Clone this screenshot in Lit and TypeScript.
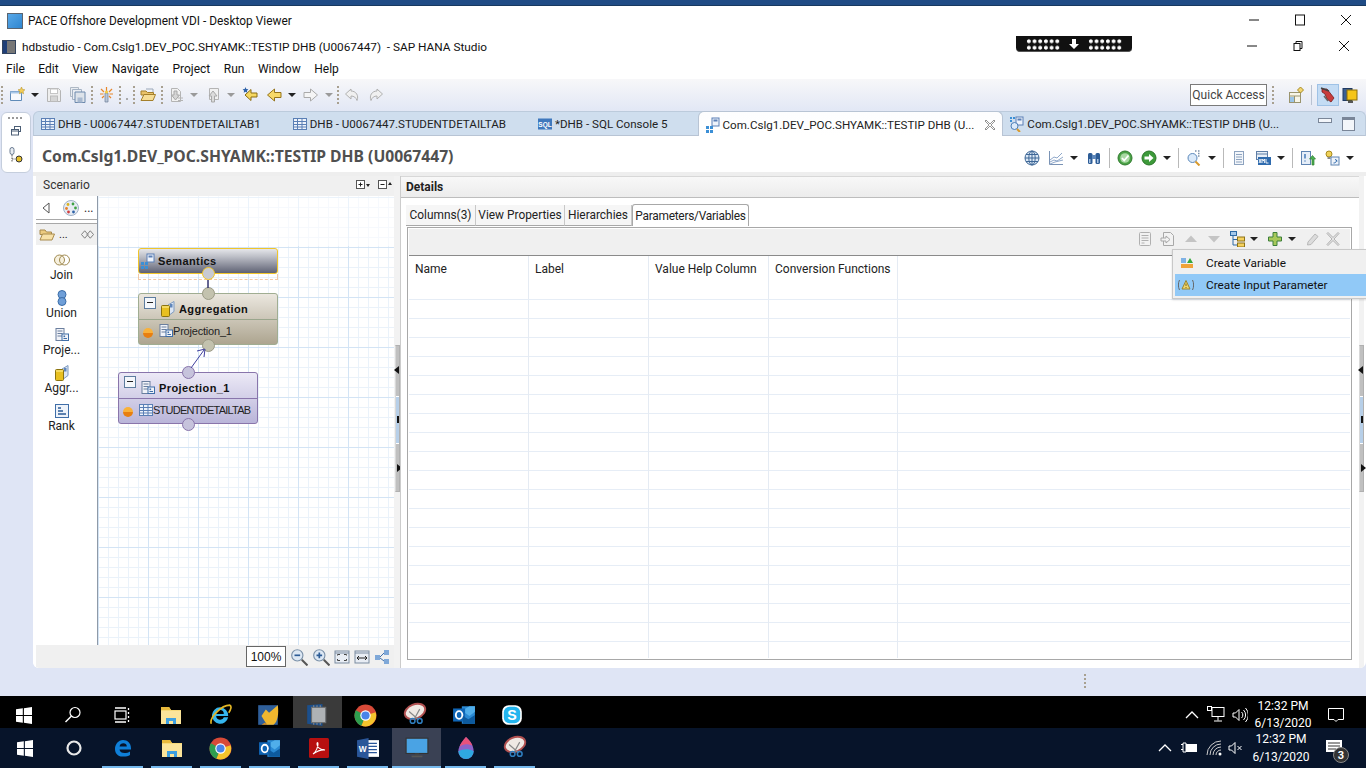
import {LitElement, html, svg, css} from 'lit';
import {customElement} from 'lit/decorators.js';

const ic = (body: unknown, size = 16, vb = 16) =>
    html`<svg class="ic" width="${size}" height="${size}" viewBox="0 0 ${vb} ${vb}">${body}</svg>`;

const hana = svg`<ellipse cx="11" cy="8" rx="9" ry="6" transform="rotate(-22 11 8)" fill="#efe9e4" stroke="#b05050" stroke-width="1.6"/><path d="M6 8l8 7M15 6l-5 9" stroke="#888"/><circle cx="15" cy="16" r="2" fill="none" stroke="#2f7fc0" stroke-width="1.3"/><circle cx="9" cy="16" r="2" fill="none" stroke="#2f7fc0" stroke-width="1.3"/>`;
const winLogo = svg`<path d="M1 3.300l6.800-1v6.700H1zM8.900 2.200L17 1v8H8.900zM1 10h6.800v6.700L1 15.700zM8.900 10H17v8l-8.100-1.200z" fill="#fff"/>`;
const folder = svg`<path d="M1 3h8l2 3h10v14H1z" fill="#f6d97a"/><path d="M1 3h8l2 3H1z" fill="#e8b93c"/><path d="M1 7h20v13H1z" fill="#fbe49a"/><path d="M6 20v-6h10v6h-3v-3H9v3z" fill="#3d9fe0"/>`;
const chrome = svg`<circle cx="11" cy="11" r="10.500" fill="#d84a38"/><path d="M11 11l9.700-3A10.500 10.500 0 0 1 7 20.800z" fill="#f5c42c"/><path d="M11 11L7 20.800A10.500 10.500 0 0 1 1.800 6z" fill="#2e9e4f"/><circle cx="11" cy="11" r="5" fill="#fff"/><circle cx="11" cy="11" r="3.900" fill="#4a84e8"/>`;
const outlook = svg`<rect x="9" y="3" width="12" height="16" fill="#2a8ad4"/><path d="M9 7l7-4h5v5l-5 4z" fill="#50aeea"/><rect x="1" y="5" width="11" height="12" fill="#0f65b5"/><ellipse cx="6.500" cy="11" rx="3" ry="3.600" fill="none" stroke="#fff" stroke-width="1.700"/><path d="M10 12l5 3 6-4v8H10z" fill="#0d5a9e"/>`;
const calcBlocks = svg`<rect x="7" y="1" width="7" height="8" fill="#eef3fb" stroke="#5a7fb5"/><rect x="8.500" y="2.500" width="4" height="2" fill="#5a7fb5"/>`;

const toolIcons: Record<string, unknown> = {
    newf: svg`<path d="M1.500 4.500h11v9h-11z" fill="#f7fafd" stroke="#5f8bb8"/><path d="M1.500 4.500h11v2h-11z" fill="#a8c8e8"/><path d="M12.500 0l1 2.400 2.400.4-1.800 1.600.5 2.400-2.100-1.300-2.100 1.300.5-2.400L9 2.800l2.400-.4z" fill="#f2cd56" stroke="#b08a1f" stroke-width=".5"/>`,
    save: svg`<path d="M1.500 1.500h11l2 2v11h-13z" fill="#eee" stroke="#b5b5b5"/><rect x="4.500" y="2" width="7" height="4.500" fill="#fff" stroke="#c5c5c5"/><rect x="4.500" y="9" width="7" height="5.500" fill="#d5d5d5" stroke="#bbb"/>`,
    saveall: svg`<path d="M.5 .5h8v9h-8z" fill="#e9edf2" stroke="#aeb8c4"/><path d="M2.500 2.500h9v10h-9z" fill="#e9edf2" stroke="#a4b2c4"/><path d="M5 5h10v10.500H5z" fill="#dde3ea" stroke="#6d89ad"/><rect x="7.500" y="10.500" width="5" height="5" fill="#a8b9d0"/>`,
    wand: svg`<path d="M7 6h3v9H7z" fill="#b9c6d8" stroke="#6d7f99" stroke-width=".7"/><path d="M8.500 0v4M3 2l3 3M14 2l-3 3M2 7h3.500M11.500 7H15M4 11l2-2M13 11l-2-2" stroke="#e8862a" stroke-width="1.200"/><circle cx="8.500" cy="5" r="1.600" fill="#f2cb40"/>`,
    open: svg`<path d="M1 4h5l1.500 1.500h6V8H1z" fill="#e9c26a" stroke="#a47f2a"/><path d="M1 13.500h12l2.500-6H4z" fill="#f6dd96" stroke="#a47f2a"/><path d="M6 2h7v3" fill="none" stroke="#9aa7b8"/>`,
    imp: svg`<path d="M3.500 1.500h6l3 3v10h-9z" fill="#f1f1f1" stroke="#b4b4b4"/><path d="M6 4h3v4h2.500l-4 5-4-5H6z" fill="#d5d5d5" stroke="#a8a8a8"/><path d="M10 11h5M10 13.500h5" stroke="#b4b4b4"/>`,
    exp: svg`<path d="M4.500 1.500h9v11h-9z" fill="#f1f1f1" stroke="#b4b4b4"/><path d="M6.500 15V9H4l4-5 4 5H9.500v6z" fill="#dcdcdc" stroke="#a8a8a8"/>`,
    starback: svg`<path d="M15 6v4H9v3.500L3 8l6-5.500V6z" fill="#f6d860" stroke="#8a6c12"/><path d="M3.500 0l.8 2 2.100.3-1.500 1.400.4 2-1.800-1-1.800 1 .4-2L.6 2.300l2.100-.3z" fill="#2e62a8"/>`,
    back: svg`<path d="M15 5.500v5H8.500V14l-7-6 7-6v3.500z" fill="#f7d968" stroke="#94731a"/>`,
    fwd: svg`<path d="M1 5.500v5h6.500V14l7-6-7-6v3.500z" fill="#f5f5f5" stroke="#aaa"/>`,
    undo: svg`<path d="M7 2L1.500 7 7 12V9c3 0 5 1.500 6 4.500 2-5-1-9.500-6-9.500z" fill="#f0f0f0" stroke="#b0b0b0"/>`,
    redo: svg`<path d="M9 2l5.500 5L9 12V9c-3 0-5 1.500-6 4.500C1 8.500 4 4 9 4z" fill="#f0f0f0" stroke="#b0b0b0"/>`,
    persp: svg`<rect x="1.500" y="5.500" width="11" height="10" fill="#f7f5e8" stroke="#9a946e"/><path d="M1.500 9h11M6.500 9v6.500" stroke="#9a946e"/><rect x="2" y="10" width="4" height="5" fill="#9bc5e8"/><path d="M12.500 0l3 3-3 3-3-3z" fill="#f3d670" stroke="#a58a24"/>`,
    tool: svg`<path d="M2 2h5l7 9-3 4-4-3-2-5-3-2z" fill="#c83c3c" stroke="#7b1d1d" stroke-width=".8"/><path d="M1 1l8 3" stroke="#444" stroke-width="1.400"/><path d="M4 9l4 5" stroke="#666" stroke-width="1.500"/>`,
    perspY: svg`<rect x="1" y="1.500" width="9" height="12" fill="#3a5f94" stroke="#1f3a63"/><rect x="5" y="3" width="10" height="10" fill="#f5c518" stroke="#8a6d0a"/><rect x="6" y="14" width="5" height="2" fill="#555"/>`,
    globe: svg`<circle cx="8" cy="8" r="7" fill="#dbe8f5" stroke="#3d6696"/><ellipse cx="8" cy="8" rx="3.200" ry="7" fill="none" stroke="#3d6696"/><path d="M1 8h14M2 4.500h12M2 11.500h12M8 1v14" stroke="#3d6696" fill="none"/>`,
    chart: svg`<path d="M1.500 1v13.500H15" fill="none" stroke="#7a93b5"/><path d="M2 10l4-3 3 1 5-5M2 12l4-2 3 1 6-4M2 14l5-2 8-2" fill="none" stroke="#8fa8ca"/>`,
    bino: svg`<rect x="2" y="3" width="4.500" height="11" rx="1.500" fill="#2d5c96"/><rect x="9.500" y="3" width="4.500" height="11" rx="1.500" fill="#2d5c96"/><rect x="6" y="5" width="4" height="4" fill="#5e88bb"/><rect x="3" y="9" width="1.500" height="4" fill="#a9c4e3"/><rect x="11" y="9" width="1.500" height="4" fill="#a9c4e3"/>`,
    check: svg`<circle cx="8" cy="8" r="7" fill="#4aa146" stroke="#2e7a2c"/><circle cx="8" cy="8" r="4.800" fill="#a9d9a4"/><path d="M5 8l2.200 2.500 4.300-5" fill="none" stroke="#fff" stroke-width="1.800"/>`,
    go: svg`<circle cx="8" cy="8" r="7" fill="#3d9a3a" stroke="#2a7528"/><path d="M3.500 6.500H8V4l4.500 4L8 12V9.500H3.500z" fill="#fff"/>`,
    zoomdots: svg`<circle cx="6.500" cy="8" r="4.500" fill="#dbeafa" stroke="#5b88bb"/><path d="M9.500 11.500l4 4" stroke="#d99a2c" stroke-width="2"/><path d="M9 1h1.500M12 1h1.500M12 3.500h1.500M12 6h1.500" stroke="#7a8ea8" stroke-width="1.500"/>`,
    doc: svg`<rect x="3.500" y="1.500" width="9" height="13" fill="#f3f6fa" stroke="#8da3bf"/><path d="M5 4.500h6M5 7h6M5 9.500h6M5 12h6" stroke="#8da3bf"/>`,
    xml: svg`<rect x="1.500" y="1.500" width="11" height="8" fill="#e8eff7" stroke="#5e7ea6"/><path d="M1.500 4h11" stroke="#5e7ea6"/><rect x="3" y="7" width="13" height="8" fill="#2f6bae"/><path d="M4 9l2 4M6 9l-2 4M7 13V9l1.200 2 1.200-2v4M11 9v4h2.500" stroke="#fff" fill="none" stroke-width=".9"/>`,
    pub: svg`<rect x="1.500" y="1.500" width="9" height="13" fill="#e6eef8" stroke="#5f84b2"/><path d="M5 4v4.500M5 10.500v1" stroke="#2f6bae" stroke-width="1.300"/><path d="M12 15V9H9.500l3-3.500 3 3.500H14v6z" fill="#4cb050" stroke="#2f7f32" stroke-width=".7"/>`,
    bulb: svg`<circle cx="5" cy="4" r="3" fill="#f0d25a" stroke="#a88a1e"/><rect x="3.500" y="7" width="3" height="2" fill="#888"/><rect x="7" y="7" width="8" height="8" fill="#eef3fa" stroke="#5f84b2"/><path d="M9.500 13c2 0 3-1 3-3M11 9.500l1.500.5.5 1.500" fill="none" stroke="#2f6bae"/>`,
    note: svg`<rect x="2.500" y="1.500" width="11" height="13" rx="1" fill="#f2f2f2" stroke="#b0b0b0"/><path d="M4.500 4.500h7M4.500 7h7M4.500 9.500h7M4.500 12h3" stroke="#b0b0b0"/>`,
    impdoc: svg`<path d="M3.500 1.500h7l3 3v10h-10z" fill="#f2f2f2" stroke="#a8a8a8"/><path d="M1 7h5V5l4 3.500L6 12v-2H1z" fill="#f2f2f2" stroke="#a8a8a8"/>`,
    hier: svg`<rect x="1.500" y=".5" width="6" height="4" fill="#a4c8ea" stroke="#2e6aa5"/><path d="M4 5v9h4M4 8.500h4" fill="none" stroke="#2e6aa5"/><rect x="8.500" y="6" width="7" height="4" fill="#f5d15f" stroke="#8e7217"/><rect x="8.500" y="12" width="7" height="4" fill="#f5d15f" stroke="#8e7217"/>`,
    plus: svg`<path d="M6 1.500h4V6h4.500v4H10v4.500H6V10H1.500V6H6z" fill="#a7c85a" stroke="#3c7f3a"/>`,
    pen: svg`<path d="M3 11l7-8 3 2.500-7 8-3.500.5z" fill="#dcdcdc" stroke="#b8b8b8"/>`,
    del: svg`<path d="M2 2.500L3 1.500 8 6.500 13 1.500l1 1-5 5.500 5 5.500-1 1-5-5-5 5-1-1 5-5.500z" fill="#e8e8e8" stroke="#a0a0a0" stroke-width=".8"/>`,
    up: svg`<path d="M8 4.500l6 6.500H2z" fill="#c4c4c4"/>`,
    down: svg`<path d="M8 11.500L14 5H2z" fill="#c4c4c4"/>`,
    restore: svg`<rect x="6.500" y="3.500" width="6" height="5" fill="#fff" stroke="#4b5d75"/><rect x="3.500" y="6.500" width="7" height="5.500" fill="#fff" stroke="#4b5d75"/><path d="M3.500 8h7" stroke="#4b5d75"/>`,
    linkset: svg`<rect x="2" y="0.500" width="4" height="7" rx="2" fill="#e8edf3" stroke="#6b7b90"/><path d="M4 8v7M4 12h3" stroke="#555" stroke-dasharray="1.500 1"/><circle cx="11" cy="12" r="3" fill="#e6c12e" stroke="#333"/>`,
    sql: svg`<rect x="1" y="2.500" width="14" height="11" fill="#3f78bd"/><text x="8" y="11" font-size="6.500" font-family="Liberation Sans, sans-serif" font-weight="700" fill="#fff" text-anchor="middle">SQL</text>`,
    table: svg`<rect x="1.500" y="2.500" width="13" height="11" fill="#eef3fb" stroke="#5a7fb5"/><path d="M1.500 5.500h13M1.500 8.500h13M1.500 11h13M5.500 3v10M10 3v10" stroke="#5a7fb5" fill="none"/>`,
    calc: svg`${calcBlocks}<rect x="1" y="9" width="3" height="3" fill="#3b8fd6"/><rect x="5" y="9" width="3" height="3" fill="#3b8fd6"/><rect x="1" y="13" width="3" height="3" fill="#3b8fd6"/><rect x="5" y="13" width="3" height="3" fill="#3b8fd6"/>`,
    calcq: svg`${calcBlocks}<circle cx="5.500" cy="10" r="3.500" fill="#dbeafa" stroke="#4d7fb6"/><path d="M8 13l3 3" stroke="#d99a2c" stroke-width="2"/><rect x="1" y="1" width="2" height="2" fill="#3b8fd6"/><rect x="4" y="1" width="2" height="2" fill="#3b8fd6"/><rect x="1" y="4" width="2" height="2" fill="#3b8fd6"/>`,
    join: svg`<circle cx="5.500" cy="8" r="5" fill="#f7f1df" stroke="#a08a50"/><circle cx="10.500" cy="8" r="5" fill="none" stroke="#a08a50"/>`,
    union: svg`<circle cx="8" cy="4.500" r="4" fill="#6f9fd8" stroke="#3c6ea8"/><circle cx="8" cy="11.500" r="4" fill="#6f9fd8" stroke="#3c6ea8"/>`,
    proj: svg`<rect x="2" y="1.500" width="8" height="12" fill="#f1f3f8" stroke="#6b7f9e"/><path d="M3.500 4h5M3.500 6.500h5M3.500 9h5" stroke="#6b7f9e"/><rect x="8" y="7" width="6.500" height="6.500" fill="#f1f3f8" stroke="#3f6ea8"/><rect x="9.500" y="8.500" width="1.600" height="1.600" fill="#3f6ea8"/><path d="M9.500 11.500H13" stroke="#3f6ea8"/>`,
    aggr: svg`<path d="M8 4l6-3.500v10l-6 4.500z" fill="#dde6f3" stroke="#7d9ac0"/><rect x="10" y="3" width="2.500" height="3.500" fill="#5f86bb"/><rect x="1.500" y="4.500" width="8" height="11" rx="1" fill="#e8c020" stroke="#8a7310"/><path d="M2 6h7" stroke="#fff3a0"/>`,
    rank: svg`<rect x="1.500" y="1.500" width="13" height="13" fill="#eef3fa" stroke="#3f6ea8"/><path d="M4 5h3M4 8h5M4 11h8" stroke="#2d5c96" stroke-width="1.500"/>`,
    palette: svg`<circle cx="8" cy="8" r="7.500" fill="#e7ecf3" stroke="#9fb0c6"/><circle cx="5" cy="4.500" r="1.400" fill="#d9b21f"/><circle cx="10" cy="4" r="1.400" fill="#3fa244"/><circle cx="12.500" cy="8" r="1.400" fill="#3fa244"/><circle cx="3.500" cy="8.500" r="1.400" fill="#e8812a"/><circle cx="5.500" cy="12" r="1.400" fill="#d23c3c"/><circle cx="10.500" cy="12" r="1.400" fill="#2e62a8"/>`,
    pfolder: svg`<path d="M1 3h5l1.500 2h5v2.500H1z" fill="#eccb80" stroke="#a88a4c"/><path d="M1 13h12l2.500-6h-12z" fill="#f7e1a8" stroke="#a88a4c"/>`,
    variable: svg`<rect x="3" y="3" width="5" height="5" fill="#7fb2e5"/><path d="M12 3l3 5H9z" fill="#35a83c"/><rect x="3" y="9" width="12" height="4" fill="#f0a33a"/>`,
    inparam: svg`<path d="M8 3.500l4 8.500H4z" fill="#f0d56a" stroke="#9a8430"/><path d="M8 6.500v2.500M8 10v1" stroke="#7b6a20"/><path d="M1.500 3c-1.500 3-1.500 7 0 10M14.500 3c1.500 3 1.500 7 0 10" fill="none" stroke="#666"/>`,
};

const I = (k: string) => ic(toolIcons[k]);
const caret = html`<i class="caret"></i>`;
const chevron = svg`<path d="M1 10l6-6 6 6" fill="none" stroke="#fff" stroke-width="1.300"/>`;

@customElement('app-root')
export class AppRoot extends LitElement {
    static override styles = css`
        :host {
            display: block;
            width: 1366px;
            height: 768px;
            overflow: hidden;
            position: relative;
            background: #fff;
            font-family: Roboto, "Noto Sans", sans-serif;
            font-size: 12px;
            color: #222;
        }
        * { box-sizing: border-box; }
        .ic { flex: none; display: block; }
        .root { display: flex; flex-direction: column; height: 768px; }

        .strip { height: 6px; background: #1f4b85; border-bottom: 1px solid #17385f; flex: none; }
        .vtitle { height: 30px; flex: none; display: flex; align-items: center; padding: 0 0 0 7px; font-size: 11.9px; color: #111; }
        .vlogo { width: 16px; height: 16px; background: linear-gradient(135deg,#58a8e8,#2f86d0); border: 1px solid #5a6470; margin-right: 5px; }
        .winbtns { margin-left: auto; display: flex; margin-right: -3px; margin-top: -2px; }
        .atitle .winbtns { margin-right: -1px; }
        .winbtns span { width: 46px; height: 22px; display: flex; align-items: center; justify-content: center; }
        .atitle { height: 22px; flex: none; display: flex; align-items: center; padding-left: 2px; font-size: 11.8px; color: #111; }
        .alogo { width: 14px; height: 14px; background: linear-gradient(90deg,#1f3f78 30%,#777 30%); border: 1px solid #33445e; margin-right: 6px; }
        .menu { height: 21px; flex: none; display: flex; gap: 13.5px; align-items: center; padding-left: 6px; font-size: 12px; color: #111; }

        .toolbar { height: 32px; flex: none; display: flex; align-items: center; padding: 0 8px 1px 1px; background: linear-gradient(#f7f7f9,#e2e7f5); }
        .toolbar .ic { margin-right: 8px; }
        .grip { width: 2px; height: 18px; flex: none; margin: 0 5px 0 -3px; background: repeating-linear-gradient(#a8a090 0 2px, transparent 2px 4px); }
        .grip.first { margin: 0 6px 0 0; }
        .caret { width: 0; height: 0; flex: none; border-left: 4px solid transparent; border-right: 4px solid transparent; border-top: 4px solid #222; margin: 0 7px 0 -2px; }
        .caret.off { border-top-color: #9a9a9a; }
        .dot { width: 2px; height: 2px; background: #aaa; margin: 8px 8px 0 0; flex: none; }
        .quick { margin-left: auto; width: 77px; height: 22px; border: 1px solid #7a7a7a; background: #fff; display: flex; align-items: center; justify-content: center; font-size: 12px; color: #444; margin-right: 5px; }
        .tright { display: flex; align-items: center; }
        .tright .grip { margin: 0 14px 0 0; }
        .tright .ic { margin-right: 0; }
        .vsep { width: 1px; height: 20px; background: #b9c2d2; margin: 0 5px 0 7px; }
        .active { width: 22px; height: 22px; background: #c4dcf4; border: 1px solid #9fc2e6; display: flex; align-items: center; justify-content: center; margin-right: 3px; }

        .work { flex: 1; display: flex; background: #dfe5f5; min-height: 0; }
        .trim { width: 33px; flex: none; padding: 0 2px 0 1px; }
        .trimbox { height: 61px; margin-top: 1px; background: #fff; border: 1px solid #c5cedd; border-radius: 6px; display: flex; flex-direction: column; align-items: center; padding-top: 4px; }
        .tdots { width: 16px; height: 2px; margin-bottom: 4px; background: repeating-linear-gradient(90deg,#999 0 2px, transparent 2px 4px); }
        .trimbox .ic + .ic { margin-top: 8px; }
        .editor { flex: 1; display: flex; flex-direction: column; min-width: 0; }
        .tabs { height: 25px; flex: none; display: flex; background: #cfdeee; border: 1px solid #bccbdc; border-bottom: 1px solid #b8c4d4; border-radius: 6px 6px 0 0; font-size: 11.6px; color: #222; }
        .tab { display: flex; align-items: center; gap: 2px; padding: 1px 25px 0 6px; white-space: nowrap; }
        .tab.sql { padding-right: 30px; }
        .tab.on { background: linear-gradient(#fdfdfe,#fff); border: 1px solid #b8c4d4; border-bottom: none; border-radius: 6px 6px 0 0; height: 25px; margin-top: -1px; padding-right: 6px; }
        .tab.on .close { margin-left: 8px; }
        .tabs .minmax { margin-left: auto; display: flex; gap: 10px; align-items: center; padding-right: 10px; }
        .minb { width: 14px; height: 5px; border: 1px solid #7a8698; background: #f3f6fa; margin-top: -6px; }
        .maxb { width: 13px; height: 14px; border: 1px solid #7a8698; border-top-width: 3px; background: #f3f6fa; }

        .etitle { height: 36px; flex: none; background: #fff; display: flex; align-items: center; padding: 4px 0 0 9px; }
        .etitle h1 { margin: 0; font-size: 15.7px; font-weight: 700; color: #505050; white-space: nowrap; font-family: "Noto Sans", "Liberation Sans", sans-serif; }
        .etools { margin-left: auto; margin-top: 4px; display: flex; align-items: center; padding-right: 12px; }
        .etools .caret { margin: 0 0 0 6px; }
        .esep { width: 1px; height: 20px; background: #b9b9b9; margin: 0 7px; }
        .etools .ic { margin-left: 8px; }
        .etools .esep + .ic { margin-left: 0; }

        .ebody { flex: 1; display: flex; background: #fff; border-top: 4px solid #eee; min-height: 0; border-radius: 0 0 6px 6px; overflow: hidden; }

        .left { width: 361px; flex: none; padding-left: 3px; display: flex; flex-direction: column; background: #fff; }
        .shead { height: 20px; flex: none; display: flex; align-items: center; padding: 0 0 2px 7px; background: #f0f0f0; color: #333; font-size: 12px; }
        .shead .sic { margin-left: auto; display: flex; gap: 6px; padding-right: 1px; }
        .sbody { flex: 1; display: flex; min-height: 0; }
        .palette { width: 62px; flex: none; background: #fff; border-right: 1px solid #8f9aa8; display: flex; flex-direction: column; }
        .pnav { height: 24px; display: flex; align-items: center; gap: 5px; padding: 0 0 0 3px; border-bottom: 1px solid #a8a8a8; }
        .pnav .ic:first-child { margin-right: 3px; }
        .pfold { height: 22px; margin-top: 3px; border-top: 1px solid #a8a8a8; background: #f0f0f0; display: flex; align-items: center; padding-left: 3px; gap: 4px; font-size: 11px; }
        .pfold .swap { margin-left: auto; margin-right: 3px; }
        .pitem { display: flex; flex-direction: column; align-items: center; color: #222; font-size: 12px; line-height: 15px; height: 37.7px; padding-right: 10px; }
        .pitems { padding-top: 7px; }
        .canvas {
            flex: 1; position: relative; overflow: hidden;
            background-color: #fff;
            background-image:
                linear-gradient(#d3e4f5 1px, transparent 1px),
                linear-gradient(90deg, #d3e4f5 1px, transparent 1px),
                linear-gradient(#eaf2fa 1px, transparent 1px),
                linear-gradient(90deg, #eaf2fa 1px, transparent 1px);
            background-size: 50px 50px, 50px 50px, 10px 10px, 10px 10px;
            background-position: 0 1px, 0 0, 0 1px, 0 0;
        }
        .wash { position: absolute; left: 0; top: 0; right: 0; height: 50px; background: rgba(255,255,255,.55); }
        .node { position: absolute; width: 140px; border-radius: 3px; font-family: "Liberation Sans", sans-serif; }
        .node .nh { height: 26px; display: flex; align-items: center; font-weight: 700; font-size: 11px; color: #111; letter-spacing: .4px; }
        .node .nb { height: 26px; display: flex; align-items: center; font-size: 11px; color: #222; padding: 0 0 4px 4px; gap: 2px; letter-spacing: -.2px; }
        .sem { left: 40px; top: 52px; height: 26px; background: linear-gradient(#e5e6ea 0%,#bfc1c9 30%,#5f6274 100%); border: 1px solid #f0c52a; }
        .sem .nh { height: 24px; padding-left: 1px; gap: 2px; }
        .semsel { position: absolute; left: 40px; top: 78px; width: 140px; height: 6px; border: 1px dashed #f2c9a5; border-top: none; }
        .agg { left: 40px; top: 97px; height: 52px; background: linear-gradient(#ebe7df,#ada590); border: 1px solid #a0ad92; }
        .agg .nh { border-bottom: 1px solid #9aa68c; padding: 5px 0 0 5px; }
        .prj { left: 20px; top: 176px; height: 52px; background: linear-gradient(#ece9f6,#b9b5d9); border: 1px solid #8975ab; }
        .prj .nh { border-bottom: 1px solid #8975ab; padding: 5px 0 0 5px; }
        .nt { margin-left: 3px; }
        .nbt { margin-left: -3px; }
        .prj .nbt { letter-spacing: -.75px; }
        .tog { width: 12px; height: 12px; border: 1px solid #5d7c9e; background: #f4f7fb; position: relative; flex: none; margin: -12px 4px 0 0; }
        .tog::after { content: ""; position: absolute; left: 2px; right: 2px; top: 4px; height: 1px; background: #222; }
        .bullet { width: 10px; height: 10px; border-radius: 50%; background: linear-gradient(#f9b13a 50%,#e87f10 50%); flex: none; margin: 4px 3px 0 0; }
        .pin { position: absolute; width: 13px; height: 13px; border-radius: 50%; border: 1px solid #9b9a86; background: #c3c2ae; }
        .pin.y { border-color: #f0c52a; background: #c8cad2; border-width: 1.5px; }
        .pin.p { border-color: #8975ab; background: #c6c3dc; }
        .pin.a { left: 104px; top: 71px; }
        .pin.b { left: 104px; top: 91px; }
        .pin.c { left: 104px; top: 143px; }
        .pin.d { left: 84px; top: 170px; }
        .pin.e { left: 84px; top: 222px; }
        .wire { position: absolute; left: 0; top: 0; pointer-events: none; }
        .zoombar { height: 23px; flex: none; display: flex; align-items: center; justify-content: flex-end; gap: 4px; padding-right: 4px; background: #f0f0f0; }
        .zbox { width: 40px; height: 21px; border: 1px solid #666; background: #fff; display: flex; align-items: center; justify-content: center; font-size: 12px; color: #111; font-family: "Liberation Sans", sans-serif; }

        .sash { width: 6px; flex: none; display: flex; flex-direction: column; background: #f2f2f2; padding-left: 1px; }
        .sash .top { height: 169px; }
        .sash .mid { height: 147px; background: #c0c0c0; position: relative; border: 1px solid #b0b0b0; border-left-color: #d8d8d8; }
        .sash .blue { position: absolute; left: 0; right: 0; top: 50px; height: 48px; background: #b7cfe8; border-top: 1px solid #fff; border-bottom: 1px solid #fff; }
        .sash .bar { position: absolute; left: 1px; width: 2px; top: 70px; height: 7px; background: #111; }
        .sash .ar { position: absolute; width: 0; height: 0; border-top: 4px solid transparent; border-bottom: 4px solid transparent; }
        .sash .a1 { left: -2px; top: 20px; border-right: 5px solid #111; }
        .sash .a2 { left: 1px; top: 118px; border-left: 5px solid #111; }
        .rsash { width: 5px; margin-right: 2px; padding-left: 0; overflow: visible; }

        .details { flex: 1; min-width: 0; display: flex; flex-direction: column; background: #fff; position: relative; border-left: 1px solid #ccc; }
        .dhead { height: 22px; flex: none; display: flex; align-items: center; padding: 0 0 1px 5px; font-weight: 700; font-size: 12px; color: #222; background: linear-gradient(#f8f8f8,#ececec); border-top: 1px solid #d8d8d8; border-bottom: 1px solid #bdbdbd; }
        .dtabs { height: 28px; flex: none; display: flex; align-items: flex-end; padding-left: 5px; font-size: 11.9px; }
        .dtab { height: 21px; display: flex; align-items: center; justify-content: center; border-right: 1px solid #c8c8c8; background: #f6f6f6; white-space: nowrap; border-bottom: 1px solid #a8a8a8; }
        .dtab.w1 { width: 70px; }
        .dtab.w2 { width: 89px; }
        .dtab.w3 { width: 67px; }
        .dtab.w4 { width: 117px; }
        .dtab.on { border: 1px solid #a8a8a8; border-bottom: none; background: #fff; border-radius: 3px 3px 0 0; height: 22px; letter-spacing: -.25px; }
        .panel { flex: 1; margin: 1px 7px 8px 6px; border: 1px solid #a8a8a8; display: flex; flex-direction: column; min-height: 0; padding: 1px; }
        .ptools { height: 27px; flex: none; background: #f0f0f0; border-bottom: 1px solid #8a8a8a; display: flex; align-items: center; justify-content: flex-end; padding: 0 9px 7px 0; gap: 7px; }
        .ptools .caret { margin: 0 2px 0 -2px; }
        .ptools .ic:last-child { margin-left: -3px; }
        .thead { height: 44px; flex: none; display: grid; grid-template-columns: 120px 120px 120px 129px 1fr; border-bottom: 1px solid #e6edf6; }
        .thead span { padding: 6px 0 0 6px; border-right: 1px solid #e5ebf3; font-size: 12px; color: #222; }
        .tbody { flex: 1; background-image: linear-gradient(#e6edf6 1px, transparent 1px); background-size: 100% 19px; background-position: 0 18px; display: grid; grid-template-columns: 120px 120px 120px 129px 1fr; }
        .tbody i { border-right: 1px solid #e5ebf3; }
        .popup { position: absolute; left: 771px; top: 73px; right: -8px; height: 50px; background: #f0f0f0; border: 1px solid #c8c8c8; padding: 2px 0 3px 2px; box-shadow: 0 1px 2px rgba(0,0,0,.15); z-index: 3; color: #111; font-size: 11.8px; }
        .mi { height: 22px; display: flex; align-items: center; }
        .mi.hi { background: #91c9f7; }
        .mi .icw { width: 22px; height: 22px; margin-right: 9px; display: flex; justify-content: center; align-items: center; flex: none; }

        .status { height: 28px; flex: none; background: #dfe5f5; display: flex; padding-left: 1084px; align-items: center; }
        .status .grip { margin: 0; height: 16px; }

        .task { flex: none; display: flex; align-items: center; color: #fff; overflow: hidden; }
        .t1 { height: 32px; background: #000; padding-top: 6px; }
        .t2 { height: 40px; background: #07142a; }
        .tb { width: 49px; height: 100%; display: flex; align-items: center; justify-content: center; flex: none; position: relative; }
        .t1 .tb { width: 48.8px; }
        .tb.cur1 { background: #3a3a3a; margin-top: -6px; height: 32px; padding-top: 6px; }
        .tb.cur2 { background: #3a4154; }
        .tb.run::after { content: ""; position: absolute; left: 4px; right: 4px; bottom: 0; height: 2px; background: #76b9ed; }
        .cur2.run::after { left: 0; right: 0; }
        .tray { margin-left: auto; display: flex; align-items: center; height: 100%; }
        .ti { display: flex; justify-content: center; align-items: center; flex: none; }
        .w20 { width: 20px; }
        .w22 { width: 22px; }
        .w28 { width: 28px; }
        .clock { text-align: center; font-size: 12px; color: #fff; white-space: nowrap; width: 66px; flex: none; }
        .t1 .clock { line-height: 17px; }
        .t2 .clock { line-height: 18px; margin-left: 1px; }
        .note { width: 40px; display: flex; justify-content: center; position: relative; flex: none; }
        .t1 .tray { padding-right: 10px; }
        .t2 .tray { padding-right: 12px; }
        .badge { position: absolute; left: 19px; top: 8px; width: 16px; height: 16px; border-radius: 50%; background: #333; border: 1px solid #888; color: #fff; font-size: 11px; font-weight: 700; display: flex; align-items: center; justify-content: center; }

        .vbar { position: absolute; left: 1016px; top: 36px; width: 116px; height: 16px; background: #111; border-radius: 0 0 4px 4px; display: flex; align-items: center; justify-content: center; gap: 9px; border-bottom: 1px solid #555; }
        .vbar .dots { width: 34px; height: 12px; background-image: radial-gradient(#fff 0 1.6px, transparent 1.8px); background-size: 5.7px 6.5px; }
        .varrow { width: 10px; height: 10px; }
    `;

    private winSvg(kind: string) {
        if (kind === 'min') return html`<svg width="12" height="12" viewBox="0 0 12 12"><path d="M1 6h10" stroke="#111"/></svg>`;
        if (kind === 'max') return html`<svg width="12" height="12" viewBox="0 0 12 12"><rect x="1.500" y="1" width="9" height="10" fill="none" stroke="#111"/></svg>`;
        if (kind === 'res') return html`<svg width="12" height="12" viewBox="0 0 12 12"><rect x="2" y="3.500" width="6" height="7" fill="none" stroke="#111"/><path d="M4 3.500V1.500h6v7H8" fill="none" stroke="#111"/></svg>`;
        return html`<svg width="12" height="12" viewBox="0 0 12 12"><path d="M1 1l10 10M11 1L1 11" stroke="#111"/></svg>`;
    }

    private renderToolbar() {
        return html`<div class="toolbar">
            <span class="grip first"></span>${I('newf')}${caret}
            ${I('save')}${I('saveall')}<span class="grip"></span>${I('wand')}<span class="grip"></span>
            <span class="dot"></span><span class="grip"></span>${I('open')}<span class="grip"></span>
            ${I('imp')}<i class="caret off"></i>${I('exp')}<i class="caret off"></i>
            ${I('starback')}${I('back')}${caret}${I('fwd')}<i class="caret off"></i>
            <span class="grip"></span>${I('undo')}${I('redo')}
            <div class="quick">Quick Access</div>
            <div class="tright"><span class="grip"></span>${I('persp')}<span class="vsep"></span>
                <span class="active">${I('tool')}</span>${I('perspY')}</div>
        </div>`;
    }

    private renderTabs() {
        return html`<div class="tabs">
            <div class="tab">${I('table')}<span>DHB - U0067447.STUDENTDETAILTAB1</span></div>
            <div class="tab">${I('table')}<span>DHB - U0067447.STUDENTDETAILTAB</span></div>
            <div class="tab sql">${I('sql')}<span>*DHB - SQL Console 5</span></div>
            <div class="tab on">${I('calc')}<span>Com.Cslg1.DEV_POC.SHYAMK::TESTIP DHB (U...</span>
                <svg class="close" width="12" height="12" viewBox="0 0 12 12"><path d="M2 1l4 4 4-4 1 1-4 4 4 4-1 1-4-4-4 4-1-1 4-4-4-4z" fill="#fff" stroke="#777" stroke-width=".8"/></svg></div>
            <div class="tab">${I('calcq')}<span>Com.Cslg1.DEV_POC.SHYAMK::TESTIP DHB (U...</span></div>
            <div class="minmax"><span class="minb"></span><span class="maxb"></span></div>
        </div>`;
    }

    private renderCanvas() {
        return html`<div class="canvas">
            <div class="wash"></div>
            <div class="semsel"></div>
            <div class="node sem"><div class="nh">${I('calc')}<span>Semantics</span></div></div>
            <div class="node agg">
                <div class="nh"><span class="tog"></span>${I('aggr')}<span class="nt">Aggregation</span></div>
                <div class="nb"><span class="bullet"></span>${I('proj')}<span class="nbt">Projection_1</span></div>
            </div>
            <div class="node prj">
                <div class="nh"><span class="tog"></span>${I('proj')}<span class="nt">Projection_1</span></div>
                <div class="nb"><span class="bullet"></span>${I('table')}<span class="nbt">STUDENTDETAILTAB</span></div>
            </div>
            <span class="pin y a"></span>
            <span class="pin b"></span>
            <span class="pin c"></span>
            <span class="pin p d"></span>
            <span class="pin p e"></span>
            <svg class="wire" width="296" height="300"><path d="M110 84v8" stroke="#35356f" stroke-width="1.500"/><path d="M93 172l13-18M99 155l8-2-1 8" fill="none" stroke="#3f3f9e"/></svg>
        </div>`;
    }

    private renderLeft() {
        const items: [string, string][] = [['join', 'Join'], ['union', 'Union'], ['proj', 'Proje...'], ['aggr', 'Aggr...'], ['rank', 'Rank']];
        return html`<div class="left">
            <div class="shead">Scenario<span class="sic">
                ${ic(svg`<rect x="1.500" y="3.500" width="8" height="8" fill="#fff" stroke="#555"/><path d="M3.500 7.500h4M5.500 5.500v4" stroke="#222"/><path d="M11 7h4l-2 3z" fill="#222"/>`)}
                ${ic(svg`<rect x="1.500" y="3.500" width="8" height="8" fill="#fff" stroke="#555"/><path d="M3.500 7.500h4" stroke="#222"/><path d="M11 8h4l-2-3z" fill="#222"/>`)}
            </span></div>
            <div class="sbody">
                <div class="palette">
                    <div class="pnav">${ic(svg`<path d="M10 3L4 8l6 5z" fill="#fff" stroke="#555"/>`)}${I('palette')}<span>...</span></div>
                    <div class="pfold">${I('pfolder')}<span>...</span>
                        <span class="swap">${ic(svg`<path d="M4 3L.5 7 4 11l3.500-4zM10 3L6.500 7l3.500 4 3.500-4z" fill="none" stroke="#777"/>`, 13, 14)}</span></div>
                    <div class="pitems">
                        ${items.map(([k, l]) => html`<div class="pitem">${I(k)}<span>${l}</span></div>`)}
                    </div>
                </div>
                ${this.renderCanvas()}
            </div>
            <div class="zoombar">
                <div class="zbox">100%</div>
                ${ic(svg`<circle cx="6.500" cy="6.500" r="5" fill="#dde8f4" stroke="#7a90a8"/><path d="M4 6.500h5" stroke="#2d5c96" stroke-width="1.500"/><path d="M10.500 10.500l5 5" stroke="#555" stroke-width="1.800"/>`, 18)}
                ${ic(svg`<circle cx="6.500" cy="6.500" r="5" fill="#dde8f4" stroke="#7a90a8"/><path d="M4 6.500h5M6.500 4v5" stroke="#2d5c96" stroke-width="1.500"/><path d="M10.500 10.500l5 5" stroke="#555" stroke-width="1.800"/>`, 18)}
                ${ic(svg`<rect x="1" y="2" width="14" height="12" fill="#e8edf4" stroke="#7a8ba0"/><path d="M1 4h14" stroke="#7a8ba0"/><path d="M3.500 6.500v-1H6M10 5.500h2.500v1M3.500 10v1.500H6M10 11.500h2.500V10" fill="none" stroke="#444"/>`)}
                ${ic(svg`<rect x="1" y="2" width="14" height="12" fill="#e8edf4" stroke="#7a8ba0"/><path d="M1 4h14" stroke="#7a8ba0"/><path d="M3 9h10M3 9l2-2M3 9l2 2M13 9l-2-2M13 9l-2 2" fill="none" stroke="#222"/>`)}
                ${ic(svg`<rect x="1" y="6" width="5" height="5" fill="#7fa8d8"/><rect x="10" y="1" width="5" height="5" fill="#7fa8d8"/><rect x="10" y="10" width="5" height="5" fill="#7fa8d8"/><path d="M6 8l4-4M6 9l4 3" stroke="#3f6ea8"/>`)}
            </div>
        </div>`;
    }

    private renderDetails() {
        return html`<div class="details">
            <div class="dhead">Details</div>
            <div class="dtabs">
                <div class="dtab w1">Columns(3)</div>
                <div class="dtab w2">View Properties</div>
                <div class="dtab w3">Hierarchies</div>
                <div class="dtab w4 on">Parameters/Variables</div>
            </div>
            <div class="panel">
                <div class="ptools">
                    ${I('note')}${I('impdoc')}${I('up')}${I('down')}${I('hier')}${caret}${I('plus')}${caret}${I('pen')}${I('del')}
                </div>
                <div class="thead"><span>Name</span><span>Label</span><span>Value Help Column</span><span>Conversion Functions</span><span></span></div>
                <div class="tbody"><i></i><i></i><i></i><i></i></div>
            </div>
            <div class="popup">
                <div class="mi"><span class="icw">${I('variable')}</span>Create Variable</div>
                <div class="mi hi"><span class="icw">${I('inparam')}</span>Create Input Parameter</div>
            </div>
        </div>`;
    }

    private sash(extra = '') {
        return html`<div class="sash ${extra}"><div class="top"></div><div class="mid"><span class="blue"></span><span class="bar"></span><span class="ar a1"></span><span class="ar a2"></span></div></div>`;
    }

    private renderTask1() {
        return html`<div class="task t1">
            <div class="tb">${ic(winLogo, 18, 18)}</div>
            <div class="tb">${ic(svg`<circle cx="11" cy="6.500" r="5" fill="none" stroke="#fff" stroke-width="1.200"/><path d="M7.500 10l-6 6" stroke="#fff" stroke-width="1.400"/>`, 18, 18)}</div>
            <div class="tb">${ic(svg`<rect x="2" y="5" width="11" height="8" fill="none" stroke="#fff" stroke-width="1.200"/><path d="M2 2h11M2 16h11M15.500 2v2M15.500 6v2M15.500 10v2M15.500 14v2" stroke="#fff" stroke-width="1.300"/>`, 18, 18)}</div>
            <div class="tb">${ic(folder, 22, 22)}</div>
            <div class="tb">${ic(svg`<path d="M11 4a7.500 7.500 0 0 1 7.500 8H7.500a3.600 3.600 0 0 0 7 1h4a7.500 7.500 0 1 1-7.500-9zM7.500 10h7a3.500 3.500 0 0 0-7 0z" fill="#35b6ee" fill-rule="evenodd"/><path d="M3 19C1 14 12 2 20 2c2 1 1 4-1 7" fill="none" stroke="#e5b826" stroke-width="1.500"/>`, 24, 22)}</div>
            <div class="tb">${ic(svg`<rect x="2" y="2" width="18" height="18" fill="#2f5f9a"/><path d="M20 2l-8 7-3-3-4 6 5 8h6c4-3 5-10 4-18z" fill="#f0b72e"/><path d="M8 18l-3 2h6z" fill="#e08f16"/>`, 24, 22)}</div>
            <div class="tb cur1">${ic(svg`<path d="M2 2l14-1v20L2 19z" fill="#1b4f8c"/><rect x="6" y="4" width="13" height="14" fill="#aeb2b5" stroke="#6c6f72"/><path d="M8 2v2M11 2v2M14 2v2M8 18v2M11 18v2M14 18v2" stroke="#888"/>`, 24, 22)}</div>
            <div class="tb">${ic(chrome, 23, 22)}</div>
            <div class="tb">${ic(hana, 26, 22)}</div>
            <div class="tb">${ic(outlook, 24, 22)}</div>
            <div class="tb">${ic(svg`<rect x="2" y="2" width="18" height="18" rx="6" fill="#fff"/><rect x="3.500" y="3.500" width="15" height="15" rx="5" fill="#23b5ef"/><text x="11" y="16" font-size="13" font-weight="700" fill="#fff" text-anchor="middle" font-family="Liberation Sans, sans-serif">S</text>`, 24, 22)}</div>
            <div class="tray">
                <span class="ti w20">${ic(chevron, 14, 14)}</span>
                <span class="ti w28">${ic(svg`<rect x="5" y="1.500" width="12" height="9" fill="none" stroke="#fff"/><rect x=".5" y=".5" width="4" height="4" fill="none" stroke="#fff"/><path d="M11 10.500v4M7 15h8" stroke="#fff"/>`, 18, 18)}</span>
                <span class="ti w20">${ic(svg`<path d="M1 6h2.500L7 2.500v11L3.500 10H1zM9.500 5a4 4 0 0 1 0 6M11.500 3a7 7 0 0 1 0 10M13.500 1a10 10 0 0 1 0 14" fill="none" stroke="#fff"/>`)}</span>
                <div class="clock">12:32 PM<br>6/13/2020</div>
                <span class="note">${ic(svg`<path d="M1.500 2.500h15v11H11l-2 2-2-2H1.500z" fill="none" stroke="#fff"/>`, 18, 18)}</span>
            </div>
        </div>`;
    }

    private renderTask2() {
        const under = ['', '', 'run', 'run', 'run', 'run', 'run', 'run', 'cur2 run', 'run', 'run'];
        const icons = [
            ic(winLogo, 18, 18),
            ic(svg`<circle cx="9" cy="9" r="6.500" fill="none" stroke="#e8e8e8" stroke-width="2.200"/>`, 18, 18),
            ic(svg`<path d="M11 3c4.500 0 8 3 8 8.500v1H7.500c.2 2.500 2.500 3.500 5 3.500 2 0 4-.5 5.500-1.500v3.500c-1.500 1-4 1.500-6.500 1.500C6 20 3 16.500 3 12s3.200-9 8-9zM7.600 9.500h7.200c0-2-1.500-3.200-3.400-3.200S7.800 7.500 7.600 9.500z" fill="#0f7fd8" fill-rule="evenodd"/>`, 22, 22),
            ic(folder, 22, 22),
            ic(chrome, 23, 22),
            ic(outlook, 23, 22),
            ic(svg`<rect x="1" y="1" width="20" height="20" rx="1.500" fill="#b71010"/><path d="M5 17c3-2 5-7 5-10 0-2-1-2-1 0 0 3 3 6 8 6-3-.5-7 .5-12 4z" fill="none" stroke="#fff" stroke-width="1.100"/>`, 22, 22),
            ic(svg`<rect x="9" y="3" width="13" height="16" fill="#fff"/><path d="M11 6h9M11 9h9M11 12h9M11 15h9" stroke="#2a5699" stroke-width="1.200"/><path d="M1 3l11-2v20L1 19z" fill="#2a5699"/><text x="6.500" y="14" font-size="8" font-weight="700" fill="#fff" text-anchor="middle" font-family="Liberation Sans, sans-serif">W</text>`, 23, 22),
            ic(svg`<rect x="1" y="2" width="20" height="14" fill="#4aa3e4" stroke="#333"/><rect x="9" y="16" width="4" height="2" fill="#444"/><rect x="6" y="18" width="10" height="1.500" fill="#555"/>`, 24, 22),
            ic(svg`<path d="M11 1c5 5 7 9 7 13a7 7 0 0 1-14 0c0-4 3-8 7-13z" fill="#8d63c9"/><path d="M11 1c3 3 5 5 6 8-4-2-9-2-12 1 1-3 3-6 6-9z" fill="#e8527c"/><path d="M4 14a7 7 0 0 0 14 0c-5-3-10-2-14 0z" fill="#2fa8e0"/>`, 24, 22),
            ic(hana, 26, 22),
        ];
        return html`<div class="task t2">
            ${icons.map((icon, i) => html`<div class="tb ${under[i]}">${icon}</div>`)}
            <div class="tray">
                <span class="ti w20">${ic(chevron, 14, 14)}</span>
                <span class="ti w28">${ic(svg`<rect x="6" y="5" width="11" height="8" fill="#fff"/><path d="M1 5.500h2M1 10.500h2M3 4h3v9H3z" stroke="#fff" fill="none"/>`, 18, 18)}</span>
                <span class="ti w22">${ic(svg`<path d="M1 15A14 14 0 0 1 15 1M4 15A11 11 0 0 1 15 4M7 15a8 8 0 0 1 8-8M10 15a5 5 0 0 1 5-5" fill="none" stroke="#ccc"/><circle cx="14" cy="14" r="1.500" fill="#fff"/>`)}</span>
                <span class="ti w22">${ic(svg`<path d="M1 6h2.500L7 2.500v11L3.500 10H1z" fill="none" stroke="#fff"/><path d="M9.500 6l4 4M13.500 6l-4 4" stroke="#fff"/>`)}</span>
                <div class="clock">12:32 PM<br>6/13/2020</div>
                <span class="note">${ic(svg`<path d="M1 1h16v12H1z" fill="#fff"/><path d="M3 4h12M3 7h12M3 10h8" stroke="#333"/>`, 18, 18)}<span class="badge">3</span></span>
            </div>
        </div>`;
    }

    override render() {
        return html`<div class="root">
            <div class="strip"></div>
            <div class="vtitle"><span class="vlogo"></span>PACE Offshore Development VDI - Desktop Viewer
                <span class="winbtns"><span>${this.winSvg('min')}</span><span>${this.winSvg('max')}</span><span>${this.winSvg('close')}</span></span></div>
            <div class="atitle"><span class="alogo"></span>hdbstudio - Com.Cslg1.DEV_POC.SHYAMK::TESTIP DHB (U0067447)&nbsp; - SAP HANA Studio
                <span class="winbtns"><span>${this.winSvg('min')}</span><span>${this.winSvg('res')}</span><span>${this.winSvg('close')}</span></span></div>
            <div class="menu"><span>File</span><span>Edit</span><span>View</span><span>Navigate</span><span>Project</span><span>Run</span><span>Window</span><span>Help</span></div>
            ${this.renderToolbar()}
            <div class="work">
                <div class="trim"><div class="trimbox"><span class="tdots"></span>${I('restore')}${I('linkset')}</div></div>
                <div class="editor">
                    ${this.renderTabs()}
                    <div class="etitle"><h1>Com.Cslg1.DEV_POC.SHYAMK::TESTIP DHB (U0067447)</h1>
                        <div class="etools">
                            ${I('globe')}${I('chart')}${caret}${I('bino')}<span class="esep"></span>${I('check')}${I('go')}${caret}<span class="esep"></span>${I('zoomdots')}${caret}<span class="esep"></span>${I('doc')}${I('xml')}${caret}<span class="esep"></span>${I('pub')}${I('bulb')}${caret}
                        </div>
                    </div>
                    <div class="ebody">
                        ${this.renderLeft()}
                        ${this.sash()}
                        ${this.renderDetails()}
                        ${this.sash('rsash')}
                    </div>
                </div>
            </div>
            <div class="status"><span class="grip"></span></div>
            ${this.renderTask1()}
            ${this.renderTask2()}
            <div class="vbar"><span class="dots"></span><svg class="varrow" viewBox="0 0 10 10"><path d="M3 0h4v5h3L5 10 0 5h3z" fill="#fff"/></svg><span class="dots"></span></div>
        </div>`;
    }
}

declare global {
    interface HTMLElementTagNameMap {
        'app-root': AppRoot;
    }
}
